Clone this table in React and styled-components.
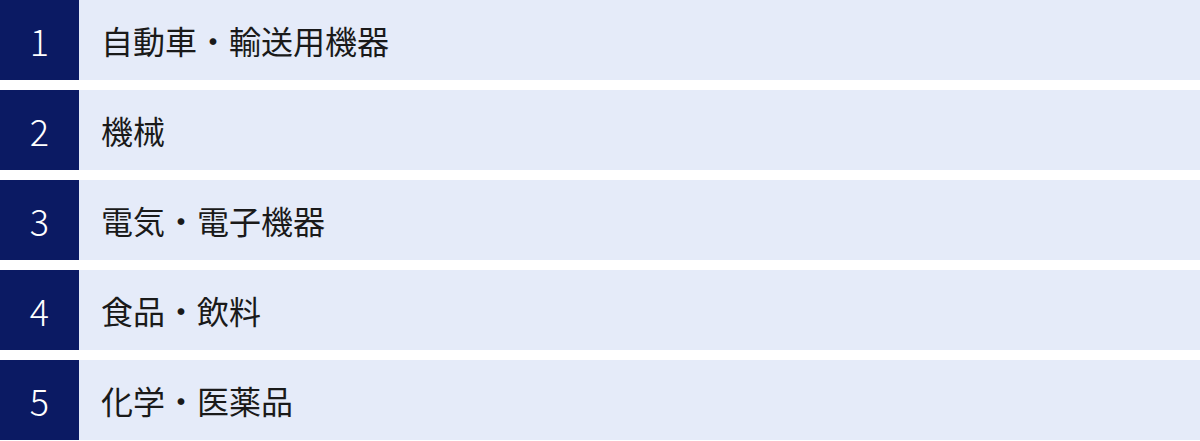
import React from 'react';
import styled, { createGlobalStyle } from 'styled-components';

const GlobalStyle = createGlobalStyle`
  html, body {
    margin: 0;
    padding: 0;
    background: #ffffff;
  }
  body {
    font-family: "Noto Sans CJK JP", "Noto Sans", sans-serif;
  }
`;

const List = styled.ul`
  list-style: none;
  margin: 0;
  padding: 0;
  display: flex;
  flex-direction: column;
  gap: 10px;
  width: 1200px;
`;

const Row = styled.li`
  display: flex;
  height: 80px;
  background: #e5ebf9;
`;

const Num = styled.div`
  width: 79px;
  flex-shrink: 0;
  display: flex;
  align-items: center;
  justify-content: center;
  background: #0b1a63;
  color: #ffffff;
  font-size: 36px;
  font-weight: 300;
  line-height: 1;
`;

const Label = styled.div`
  display: flex;
  align-items: center;
  padding-left: 22px;
  color: #1a1a1a;
  font-size: 32px;
  font-weight: 400;
  line-height: 1;
`;

const items = [
  '自動車・輸送用機器',
  '機械',
  '電気・電子機器',
  '食品・飲料',
  '化学・医薬品',
];

const App = () => (
  <>
    <GlobalStyle />
    <List>
      {items.map((item, i) => (
        <Row key={item}>
          <Num>{i + 1}</Num>
          <Label>{item}</Label>
        </Row>
      ))}
    </List>
  </>
);

export default App;
